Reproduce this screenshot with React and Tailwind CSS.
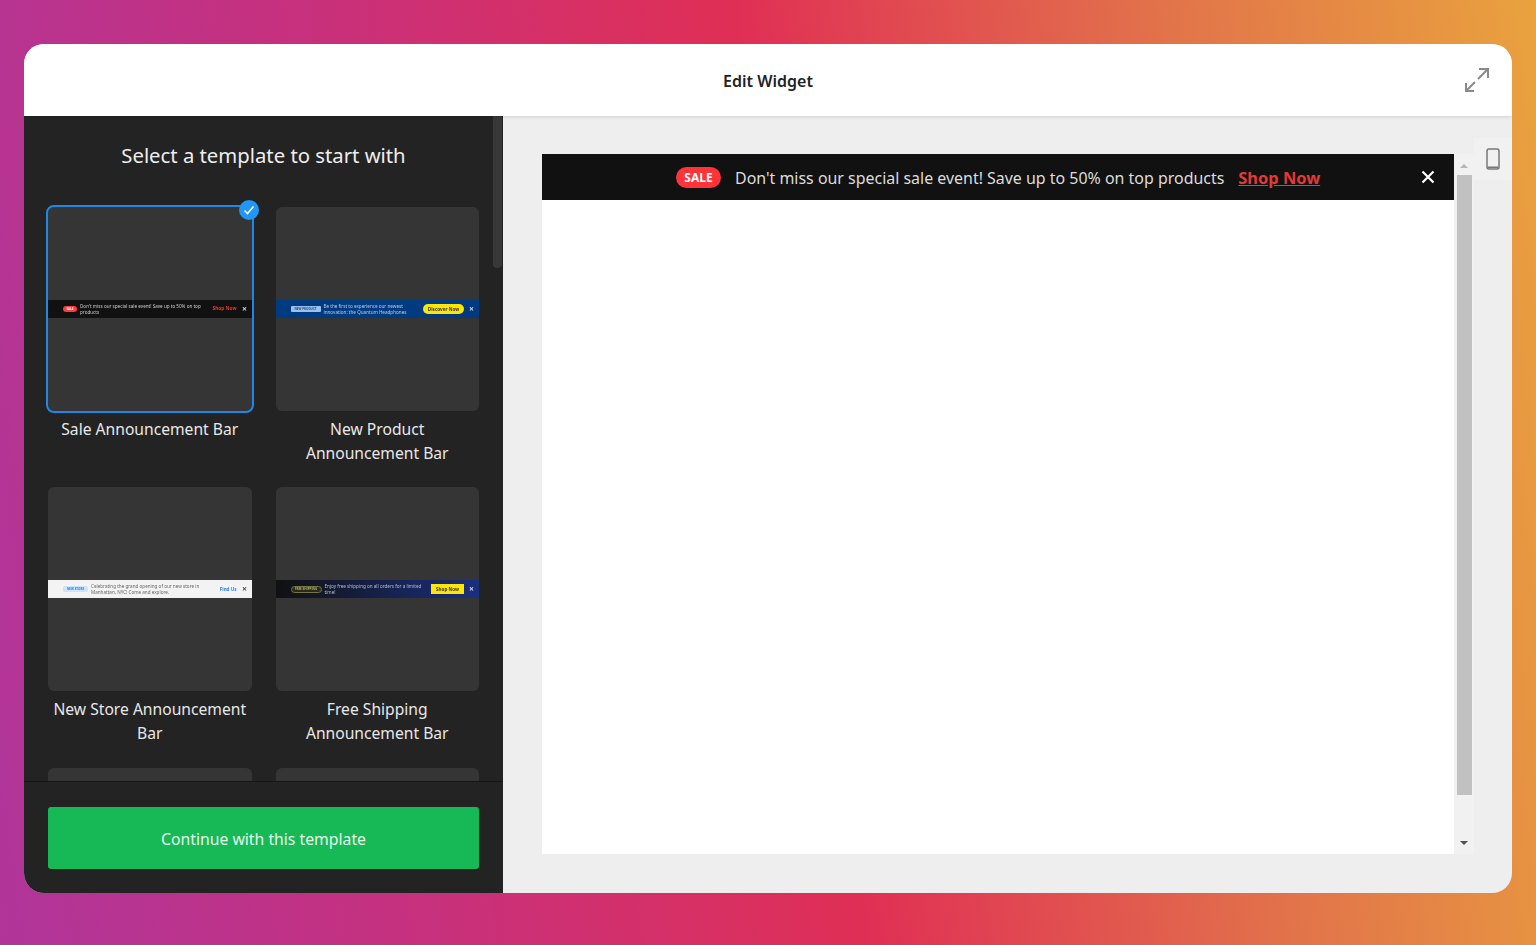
const FONT = "font-['Noto_Sans','Open_Sans',sans-serif]";

function MiniBanner({ className, pill, text, action, closeClass }) {
  return (
    <div className={"flex h-[18px] w-full items-center pl-[15px] pr-[5px] blur-[0.4px] " + className}>
      {pill}
      <p className="ml-[3px] flex-1 text-[4.6px] leading-[6px]">{text}</p>
      {action}
      <span className={"ml-[5px] text-[6px] font-bold leading-none " + closeClass}>✕</span>
    </div>
  );
}

function TemplateCard({ label, selected, children }) {
  return (
    <div className="flex flex-col items-center">
      <div
        className={
          "relative flex h-[204px] w-full items-center overflow-visible rounded-[6px] bg-[#353535] " +
          (selected ? "outline-2 outline-offset-0 outline-[#1e88e5]" : "")
        }
      >
        {children}
        {selected && (
          <span className="absolute -right-[7px] -top-[7px] flex h-[20px] w-[20px] items-center justify-center rounded-full bg-[#2196f3]">
            <svg width="12" height="12" viewBox="0 0 12 12" fill="none" stroke="white" strokeWidth="1.6">
              <path d="M1.5 6.5 L4.5 9.5 L10.5 2.5" />
            </svg>
          </span>
        )}
      </div>
      <p className="mt-[6px] text-center text-[15.65px] leading-[24px] text-[#e8e8e8]">{label}</p>
    </div>
  );
}

export default function App() {
  return (
    <div className={"h-[945px] w-[1536px] overflow-hidden bg-[linear-gradient(82deg,#b0359a_0%,#c9307a_28%,#e02f55_52%,#e2744a_78%,#e9a23e_100%)] px-[24px] pt-[44px] " + FONT}>
      <div className="flex h-[849px] flex-col overflow-hidden rounded-[20px] bg-[#eeeeee]">
        <header className="relative z-10 flex h-[72px] shrink-0 items-center justify-center bg-white pt-[1px] shadow-[0_1px_3px_rgba(0,0,0,0.12)]">
          <h1 className="text-[16px] font-semibold text-[#222]">Edit Widget</h1>
          <svg
            className="absolute right-[23px] top-[24px]"
            width="24"
            height="24"
            viewBox="0 0 24 24"
            fill="none"
            stroke="#8a8a8a"
            strokeWidth="2"
          >
            <path d="M14 1h9v9M23 1L13 11M1 15v8h8M1 23l9-9" />
          </svg>
        </header>

        <div className="flex min-h-0 flex-1">
          <aside className="flex w-[479px] shrink-0 flex-col bg-[#232323]">
            <div className="relative min-h-0 flex-1 overflow-hidden px-[24px]">
              <div className="absolute right-[1px] top-0 h-[152px] w-[9px] rounded-b-[4px] bg-[#383838]" />
              <h2 className="pb-[38px] pt-[25px] text-center text-[20.3px] leading-[28px] text-[#eeeeee]">
                Select a template to start with
              </h2>
              <div className="grid grid-cols-2 items-start gap-x-[24px] gap-y-[22px]">
                <TemplateCard label="Sale Announcement Bar" selected>
                  <MiniBanner
                    className="bg-[#111111] text-[#cccccc]"
                    pill={
                      <span className="flex h-[6px] w-[14px] items-center justify-center rounded-full bg-[#ff3b3b] text-[3px] font-bold text-white">
                        SALE
                      </span>
                    }
                    text="Don't miss our special sale event! Save up to 50% on top products"
                    action={<span className="ml-[9px] text-[4.8px] font-bold text-[#e53935]">Shop Now</span>}
                    closeClass="text-[#dddddd]"
                  />
                </TemplateCard>
                <TemplateCard label="New Product Announcement Bar">
                  <MiniBanner
                    className="bg-[#003a80] text-[#b9cbe2]"
                    pill={
                      <span className="flex h-[6px] w-[30px] items-center justify-center rounded-[1px] bg-[#9dc1ec] text-[3px] font-bold text-[#24507f]">
                        NEW PRODUCT
                      </span>
                    }
                    text="Be the first to experience our newest innovation: the Quantum Headphones"
                    action={
                      <span className="ml-[8px] flex h-[10px] w-[41px] items-center justify-center rounded-full bg-[#ffe600] text-[4.6px] font-bold text-[#333]">
                        Discover Now
                      </span>
                    }
                    closeClass="text-[#dddddd]"
                  />
                </TemplateCard>
                <TemplateCard label="New Store Announcement Bar">
                  <MiniBanner
                    className="bg-[#f3f3f3] text-[#666666]"
                    pill={
                      <span className="flex h-[6px] w-[25px] items-center justify-center rounded-[2px] bg-[#cfe3fb] text-[3px] font-bold text-[#2f80ed]">
                        NEW STORE
                      </span>
                    }
                    text="Celebrating the grand opening of our new store in Manhattan, NYC! Come and explore."
                    action={<span className="ml-[12px] text-[4.6px] font-bold text-[#2f80ed]">Find Us</span>}
                    closeClass="text-[#444444]"
                  />
                </TemplateCard>
                <TemplateCard label="Free Shipping Announcement Bar">
                  <MiniBanner
                    className="bg-[linear-gradient(90deg,#111111,#1a2f80)] text-[#b5bdd0]"
                    pill={
                      <span className="flex h-[7px] w-[31px] items-center justify-center rounded-full border-[0.5px] border-[#77763a] bg-[#2a2a20] text-[3px] font-bold text-[#b5b26a]">
                        FREE SHIPPING
                      </span>
                    }
                    text="Enjoy free shipping on all orders for a limited time!"
                    action={
                      <span className="ml-[5px] flex h-[10px] w-[33px] items-center justify-center bg-[#ffe600] text-[4.6px] font-bold text-[#333]">
                        Shop Now
                      </span>
                    }
                    closeClass="text-[#dddddd]"
                  />
                </TemplateCard>
                <div className="mt-[1px] h-[204px] rounded-[6px] bg-[#353535]" />
                <div className="mt-[1px] h-[204px] rounded-[6px] bg-[#353535]" />
              </div>
            </div>
            <div className="shrink-0 border-t border-[#151515] px-[24px] pb-[24px] pt-[25px]">
              <button className="h-[62px] w-full rounded-[3px] bg-[#16b955] pt-[3px] text-[15.75px] text-[#e6f8ed]">
                Continue with this template
              </button>
            </div>
          </aside>

          <main className="flex min-w-0 flex-1 items-start pl-[39px] pt-[22px]">
            <div className="mt-[16px] flex h-[700px] w-[932px] shrink-0">
              <div className="flex w-[912px] flex-col bg-white">
                <div className="flex h-[46px] shrink-0 items-center bg-[#111111] pl-[134px] pr-[19px] pt-[1px]">
                  <span className="flex h-[21px] w-[45px] items-center justify-center rounded-full bg-[#ff3338] text-[12px] font-bold text-white">
                    SALE
                  </span>
                  <p className="ml-[14px] mt-[2px] text-[15.95px] text-[#dddddd]">
                    Don't miss our special sale event! Save up to 50% on top products
                  </p>
                  <a className="ml-[14px] mt-[1px] text-[16.4px] font-bold text-[#e53935] underline">Shop Now</a>
                  <svg className="-mt-[2px] ml-auto" width="14" height="14" viewBox="0 0 14 14" stroke="white" strokeWidth="2.2">
                    <path d="M1.5 1.5l11 11M12.5 1.5l-11 11" />
                  </svg>
                </div>
              </div>
              <div className="flex w-[20px] flex-col items-center bg-[#f1f1f1] pt-[10px]">
                <span className="h-0 w-0 border-x-[4px] border-b-[4px] border-x-transparent border-b-[#b5b5b5]" />
                <div className="ml-[1px] mt-[7px] h-[620px] w-[15px] bg-[#c1c1c1]" />
                <span className="mt-[46px] h-0 w-0 border-x-[4px] border-t-[4px] border-x-transparent border-t-[#505050]" />
              </div>
            </div>
            <div className="flex h-[42px] w-[38px] shrink-0 items-center justify-center bg-[#f1f1f1]">
              <svg width="14" height="22" viewBox="0 0 14 22" fill="none">
                <rect x="1" y="1" width="12" height="20" rx="2" stroke="#777777" strokeWidth="1.5" />
                <path d="M2 18.5h10V20H2z" fill="#777777" />
              </svg>
            </div>
          </main>
        </div>
      </div>
    </div>
  );
}
